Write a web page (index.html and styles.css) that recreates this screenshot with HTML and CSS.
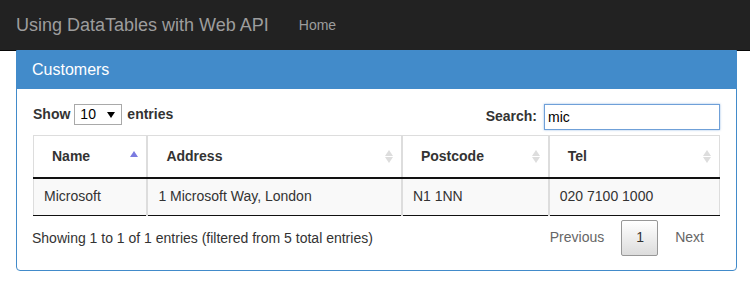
FILE: index.html
```html
<!DOCTYPE html>
<html lang="en">
<head>
    <meta charset="UTF-8">
    <title>Using DataTables with Web API</title>
    <link rel="stylesheet" href="styles.css">
</head>
<body>
    <nav class="navbar">
        <a class="brand" href="#">Using DataTables with Web API</a>
        <a class="nav-link" href="#">Home</a>
    </nav>

    <div class="panel">
        <div class="panel-heading">Customers</div>
        <div class="panel-body">
            <div class="dt-top">
                <label class="dt-length">Show
                    <span class="select-wrap">
                        <select>
                            <option>10</option>
                            <option>25</option>
                            <option>50</option>
                        </select>
                    </span>
                    entries</label>
                <label class="dt-filter">Search: <input type="text" value="mic" autofocus></label>
            </div>

            <table class="dt">
                <thead>
                    <tr>
                        <th class="c-name sort-asc">Name</th>
                        <th class="c-addr sort-both">Address</th>
                        <th class="c-post sort-both">Postcode</th>
                        <th class="c-tel sort-both">Tel</th>
                    </tr>
                </thead>
                <tbody>
                    <tr>
                        <td>Microsoft</td>
                        <td>1 Microsoft Way, London</td>
                        <td>N1 1NN</td>
                        <td>020 7100 1000</td>
                    </tr>
                </tbody>
            </table>

            <div class="dt-bottom">
                <div class="dt-info">Showing 1 to 1 of 1 entries (filtered from 5 total entries)</div>
                <div class="dt-paginate">
                    <a class="page-btn disabled">Previous</a>
                    <a class="page-btn current">1</a>
                    <a class="page-btn disabled">Next</a>
                </div>
            </div>
        </div>
    </div>
</body>
</html>
```

FILE: styles.css
```css
* {
    box-sizing: border-box;
}
body {
    margin: 0;
    font-family: "Liberation Sans", Arial, sans-serif;
    font-size: 14px;
    line-height: 1.42857;
    color: #333;
    background: #fff;
}
a {
    text-decoration: none;
}

.navbar {
    display: flex;
    align-items: center;
    height: 51px;
    background-color: #222;
    border-bottom: 1px solid #080808;
}
.brand {
    padding: 0 15px 0 16px;
    font-size: 18px;
    line-height: 50px;
    color: #9d9d9d;
}
.nav-link {
    padding: 0 15px;
    line-height: 50px;
    color: #9d9d9d;
}

.panel {
    width: 721px;
    margin-left: 16px;
    margin-top: -1px;
    border: 1px solid #428bca;
    border-radius: 0 0 4px 4px;
}
.panel-heading {
    height: 38px;
    padding: 8px 15px 0;
    background-color: #428bca;
    color: #fff;
    font-size: 16px;
}
.panel-body {
    padding: 15px 16px 14px 15px;
}

.dt-top {
    display: flex;
    justify-content: space-between;
    align-items: flex-start;
    height: 31px;
}
.dt-length {
    font-weight: bold;
    display: flex;
    align-items: center;
    height: 21px;
    padding-left: 1px;
}
.select-wrap {
    position: relative;
    margin: 0 5px 0 4px;
}
.select-wrap select {
    appearance: none;
    -webkit-appearance: none;
    width: 48px;
    height: 21px;
    padding: 0 0 0 5px;
    border: 1px solid #a9a9a9;
    border-radius: 0;
    background: #fff;
    font-family: inherit;
    font-size: 14px;
    color: #000;
}
.select-wrap::after {
    content: "";
    position: absolute;
    right: 7px;
    top: 8px;
    border-left: 4px solid transparent;
    border-right: 4px solid transparent;
    border-top: 6px solid #000;
    pointer-events: none;
}
.dt-filter {
    font-weight: bold;
    display: flex;
    align-items: center;
    height: 26px;
}
.dt-filter input {
    width: 176px;
    height: 26px;
    margin-left: 7px;
    padding: 0 3px;
    border: 1px solid #6fa0d8;
    outline: none;
    box-shadow: 0 0 2px rgba(82, 140, 212, 0.6);
    font-family: inherit;
    font-size: 14px;
    color: #000;
    caret-color: #000;
}

.dt {
    width: 687px;
    margin-left: 1px;
    border-collapse: collapse;
    border: 1px solid #ddd;
    border-bottom: 1px solid #111;
}
.dt th {
    position: relative;
    height: 42px;
    padding: 1px 18px 0;
    text-align: left;
    font-weight: bold;
    border-left: 2px solid #ddd;
    border-bottom: 2px solid #111;
}
.dt th:first-child,
.dt td:first-child {
    border-left: none;
}
.dt td {
    height: 38px;
    padding: 1px 10px 0;
    background: #f9f9f9;
    border-left: 2px solid #ddd;
}
.c-name { width: 114px; }
.c-addr { width: 255px; }
.c-post { width: 147px; }
.c-tel { width: 171px; }

.sort-asc::after {
    content: "";
    position: absolute;
    right: 8px;
    top: 15px;
    border-left: 4px solid transparent;
    border-right: 4px solid transparent;
    border-bottom: 6px solid #7b7be0;
}
.sort-both::before,
.sort-both::after {
    content: "";
    position: absolute;
    right: 8px;
    border-left: 4px solid transparent;
    border-right: 4px solid transparent;
}
.sort-both::before {
    top: 14px;
    border-bottom: 6px solid #ddd;
}
.sort-both::after {
    top: 21px;
    border-top: 6px solid #ddd;
}

.dt-bottom {
    display: flex;
    justify-content: space-between;
    align-items: flex-start;
}
.dt-info {
    padding-top: 13px;
}
.dt-paginate {
    display: flex;
    padding-top: 4px;
    padding-right: 1px;
}
.page-btn {
    display: block;
    margin-left: 2px;
    padding: 7px 14px;
    border: 1px solid transparent;
    border-radius: 2px;
    color: #666;
}
.page-btn.current {
    width: 37px;
    text-align: center;
    color: #333;
    border-color: #979797;
    background: linear-gradient(to bottom, #fff 0%, #dcdcdc 100%);
}
```
